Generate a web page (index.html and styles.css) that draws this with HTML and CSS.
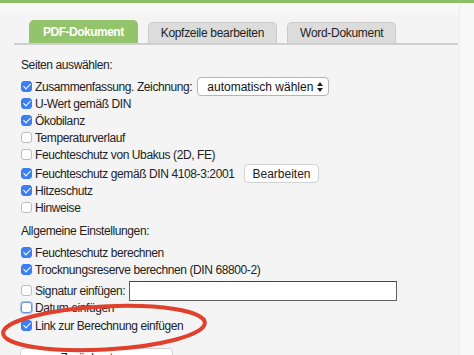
FILE: index.html
```html
<!doctype html>
<html>

	<head>
		<meta name="viewport" content="width=device-width, initial-scale=1.0">
		<title>Export</title>
		<link rel="stylesheet" href="styles.css">
	</head>

	<body>

		<div class="page">

			<div class="panel">

				<nav class="tabs">
					<a class="tab active" href="#">PDF-Dokument</a>
					<a class="tab" href="#">Kopfzeile bearbeiten</a>
					<a class="tab" href="#">Word-Dokument</a>
				</nav>

				<main class="options">

					<p class="heading">Seiten auswählen:</p>

					<label class="row first">
						<input type="checkbox" checked>
						Zusammenfassung. Zeichnung:
						<span class="selectWrap">
							<select class="select">
								<option>automatisch wählen</option>
							</select>
						</span>
					</label>
					<label class="row"><input type="checkbox" checked>U-Wert gemäß DIN</label>
					<label class="row"><input type="checkbox" checked>Ökobilanz</label>
					<label class="row"><input type="checkbox">Temperaturverlauf</label>
					<label class="row"><input type="checkbox">Feuchteschutz von Ubakus (2D, FE)</label>
					<label class="row spaced">
						<input type="checkbox" checked>
						Feuchteschutz gemäß DIN 4108-3:2001
						<button class="btn">Bearbeiten</button>
					</label>
					<label class="row"><input type="checkbox" checked>Hitzeschutz</label>
					<label class="row"><input type="checkbox">Hinweise</label>

					<p class="heading second">Allgemeine Einstellungen:</p>

					<label class="row first"><input type="checkbox" checked>Feuchteschutz berechnen</label>
					<label class="row"><input type="checkbox" checked>Trocknungsreserve berechnen (DIN 68800-2)</label>
					<label class="row signature">
						<input type="checkbox">
						Signatur einfügen:
						<input type="text" class="textField">
					</label>
					<label class="row"><input type="checkbox" class="focused">Datum einfügen</label>
					<label class="row link"><input type="checkbox" checked>Link zur Berechnung einfügen</label>

					<button class="btn wide">Zurücksetzen</button>

				</main>

			</div>

			<!-- hand drawn marker round the last option -->
			<svg class="marker" width="474" height="355" viewBox="0 0 474 355">
				<ellipse cx="104" cy="328" rx="101" ry="21.5" transform="rotate(-3 104 328)"
					fill="none" stroke="#e1402d" stroke-width="4"/>
			</svg>

		</div>

	</body>

</html>
```

FILE: styles.css
```css
html, body {
	margin: 0; padding: 0;
	font-family: "Liberation Sans", Arial, sans-serif;
	font-size: 12px;
	color: #222;
	background-color: #f8f8f8;
}

.page {
	position: relative;
	width: 474px;
	height: 355px;
	overflow: hidden;
	border-top: 3px solid #8cbf63;
	box-sizing: border-box;
}

.panel {
	width: 460px;
	height: 100%;
	background: linear-gradient(#fafafa, #f4f4f4 14px);
	border-right: 1px solid #ededed;
	box-sizing: border-box;
}

.tabs {
	display: flex;
	align-items: flex-end;
	gap: 10px;
	margin-left: 14px;
	width: 444px;
	padding: 17px 0 0 15px;
	border-bottom: 2px solid #cfcfcf;
	box-sizing: border-box;
}

.tab {
	display: flex;
	align-items: center;
	justify-content: center;
	height: 21px;
	padding: 0 12px;
	color: #222;
	text-decoration: none;
	letter-spacing: -0.3px;
	background-color: #dcdcdc;
	border: 1px solid #cacaca;
	border-bottom: 0;
	border-radius: 5px 5px 0 0;
	box-sizing: border-box;
}

.tab.active {
	height: 23px;
	padding: 0 13px;
	color: white;
	font-weight: bold;
	letter-spacing: -0.5px;
	background-color: #93c46b;
	border-color: #93c46b;
}

.options {
	padding: 12px 0 0 21px;
	letter-spacing: -0.4px;
}

.heading {
	margin: 0;
	height: 17px;
	line-height: 17px;
}

.heading.second {
	margin-top: 7px;
}

.row {
	display: flex;
	align-items: center;
	height: 17px;
	white-space: nowrap;
}

.row.first {
	margin-top: 4px;
}

.row.spaced {
	margin-top: 2px;
}

.row.signature {
	margin-top: 4px;
}

.row.link {
	margin-top: 1px;
}

.row input[type="checkbox"] {
	appearance: none;
	position: relative;
	flex: none;
	width: 11px;
	height: 11px;
	margin: 0 3px 0 0;
	background-color: white;
	border: 1px solid #bdbdbd;
	border-radius: 3px;
	box-sizing: border-box;
}

.row input[type="checkbox"]:checked {
	background-color: #3b7ff2;
	border-color: #3b7ff2;
}

.row input[type="checkbox"]:checked::after {
	content: "";
	position: absolute;
	left: 3px;
	top: 0px;
	width: 3px;
	height: 6px;
	border: solid white;
	border-width: 0 1.5px 1.5px 0;
	transform: rotate(45deg);
}

.row input.focused {
	border-color: #6f93d8;
	box-shadow: 0 0 0 1px #a9c0ea;
}

.selectWrap {
	position: relative;
	margin-left: 5px;
}

.selectWrap::before,
.selectWrap::after {
	content: "";
	position: absolute;
	right: 6px;
	border-left: 3px solid transparent;
	border-right: 3px solid transparent;
}

.selectWrap::before {
	top: 5px;
	border-bottom: 4px solid #222;
}

.selectWrap::after {
	top: 11px;
	border-top: 4px solid #222;
}

.select {
	appearance: none;
	display: block;
	width: 132px;
	height: 19px;
	padding: 0 0 0 9px;
	font-family: "Liberation Sans", Arial, sans-serif;
	font-size: 12px;
	letter-spacing: 0;
	color: #111;
	background-color: white;
	border: 1px solid #b5b5b5;
	border-radius: 4px;
}

.btn {
	height: 19px;
	margin-left: 10px;
	padding: 0 7px;
	font-family: "Liberation Sans", Arial, sans-serif;
	font-size: 12px;
	letter-spacing: 0;
	color: #222;
	background-color: white;
	border: 1px solid #d2d2d2;
	border-radius: 4px;
}

.btn.wide {
	display: block;
	width: 153px;
	margin: 14px 0 0 -1px;
	white-space: nowrap;
}

.textField {
	width: 268px;
	height: 20px;
	margin-left: 4px;
	padding: 0;
	background-color: white;
	border: 1px solid #5f5f5f;
	border-top-color: #444;
	box-sizing: border-box;
}

.marker {
	position: absolute;
	top: -3px;
	left: 0;
	pointer-events: none;
}
```
